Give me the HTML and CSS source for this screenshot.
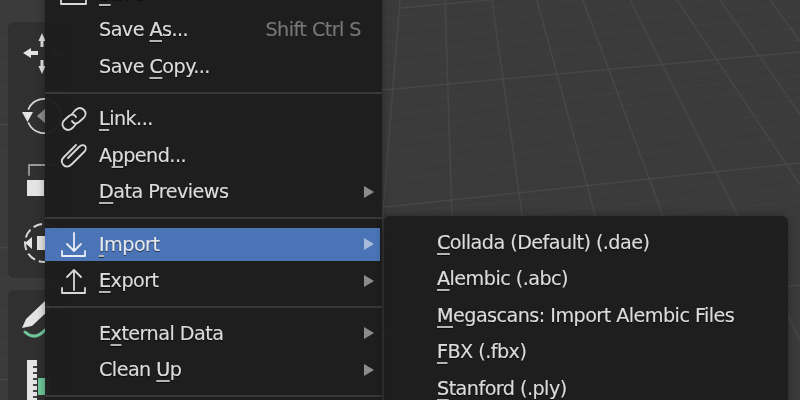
FILE: index.html
```html
<!DOCTYPE html>
<html lang="en">
<head>
<meta charset="utf-8">
<title>File menu</title>
<link rel="stylesheet" href="styles.css">
</head>
<body>
<main class="stage">
  <svg class="grid" viewBox="0 0 800 400" aria-hidden="true">
    <g class="minor">
      <path d="M0 40L800 -32M0 52L800 -20M0 64L800 -8M0 76L800 4M0 88L800 16M0 100L800 28M0 113L800 40M0 138L800 64M0 151L800 76M0 165L800 88M0 178L800 100M0 192L800 112M0 206L800 124M0 220L800 137M0 248L800 175M0 264L800 188M0 279L800 201M0 295L800 214M0 311L800 228M0 327L800 242M0 344L800 256M0 360L800 270M0 396L800 300M0 416L800 316"/>
    </g>
    <g class="major">
      <path d="M400 8L800 -28M0 125L800 52M0 248L800 163M0 380L800 285M445 0L458 400M492 0L548 400M537 0L645 400M583 0L731 400M630 0L830 400M677 0L943 400M720 0L1000 400M770 0L1060 400M400 0L368 400"/>
    </g>
  </svg>

  <aside class="toolbar">
    <div class="tool-group">
      <div class="tool">
        <svg viewBox="0 0 50 50" width="50" height="50"><path class="ic-fill" d="M8 24l8-5v3h7v4h-7v3zM27 4l3.500 8h-2v6h-3v-6h-2zM27 45l-3.500-8h2v-6h3v6h2z"/><path class="ic-dim" d="M50 24l-8-5v3h-6v4h6v3z"/></svg>
      </div>
      <div class="tool">
        <svg viewBox="0 0 50 50" width="50" height="50"><path class="ic-line" d="M13.500 16A17 17 0 1 1 13.500 30"/><path class="ic-fill" d="M7 19h11l-5.500 10z"/><path class="ic-dim" d="M22 23l9-8v16z"/></svg>
      </div>
      <div class="tool">
        <svg viewBox="0 0 50 50" width="50" height="50"><path class="ic-line ic-soft" d="M14 18V8h26"/><path class="ic-fill" d="M12 23h17v16H12z"/></svg>
      </div>
      <div class="tool">
        <svg viewBox="0 0 50 50" width="50" height="50"><circle class="ic-dash" cx="29" cy="22" r="19"/><path class="ic-fill" d="M10 22l7-6v12zM22 15h13v14H22z"/></svg>
      </div>
    </div>
    <div class="tool-group">
      <div class="tool">
        <svg viewBox="0 0 50 50" width="50" height="50"><path class="ic-fill" d="M7 31l4-9L30 4l6 7-19 18z"/><path class="ic-green" d="M10 35Q20 44 30 33"/></svg>
      </div>
      <div class="tool">
        <svg viewBox="0 0 50 50" width="50" height="50"><path class="ic-fill" d="M12 -1h10v60H12z"/><path class="ic-ticks" d="M18 6h4M18 12h4M18 18h4M18 24h4M18 30h4M18 36h4M18 42h4"/><path class="ic-greenfill" d="M23 17h12v17H23z"/></svg>
      </div>
    </div>
  </aside>

  <nav class="menu file-menu">
    <div class="row"><span class="slot"><svg viewBox="0 0 28 28" width="28" height="28"><path class="ic-line" d="M1 -20H26V25H1z"/></svg></span><span class="label"><u>S</u>ave</span><span class="shortcut">Ctrl S</span><span class="end"></span></div>
    <div class="row"><span class="slot"></span><span class="label">Save <u>A</u>s...</span><span class="shortcut">Shift Ctrl S</span><span class="end"></span></div>
    <div class="row"><span class="slot"></span><span class="label">Save <u>C</u>opy...</span><span class="end"></span></div>
    <div class="sep"></div>
    <div class="row"><span class="slot"><svg viewBox="0 0 28 28" width="28" height="28"><path class="ic-line" d="M12 9l3-3.500c3-3 6.500-3 9-.5s2 6-1 8.500l-4 3.500c-2.500 2-5.500 2-7-1"/><path class="ic-line" d="M16 19l-3 3.500c-3 3-6.500 3-9 .5s-2-6 1-8.500l4-3.500c2.500-2 5.500-2 7 1"/></svg></span><span class="label"><u>L</u>ink...</span><span class="end"></span></div>
    <div class="row"><span class="slot"><svg viewBox="0 0 28 28" width="28" height="28"><path class="ic-line" d="M8 17L19 6c2.500-2.500 5-2 6-1s1.500 3.500-1 6L12 23c-3.500 3.500-6.500 3-8.500 1S1 19 4 16L16 4"/></svg></span><span class="label">A<u>p</u>pend...</span><span class="end"></span></div>
    <div class="row"><span class="slot"></span><span class="label"><u>D</u>ata Previews</span><span class="end"><i class="arrow"></i></span></div>
    <div class="sep"></div>
    <div class="row active"><span class="slot"><svg viewBox="0 0 28 28" width="28" height="28"><path class="ic-line" d="M14 3v18M7 14l7 7 7-7M2 21v5h23v-5"/></svg></span><span class="label"><u>I</u>mport</span><span class="end"><i class="arrow"></i></span></div>
    <div class="row"><span class="slot"><svg viewBox="0 0 28 28" width="28" height="28"><path class="ic-line" d="M14 23V3M7 10l7-7 7 7M2 21v5h23v-5"/></svg></span><span class="label"><u>E</u>xport</span><span class="end"><i class="arrow"></i></span></div>
    <div class="sep"></div>
    <div class="row"><span class="slot"></span><span class="label">E<u>x</u>ternal Data</span><span class="end"><i class="arrow"></i></span></div>
    <div class="row"><span class="slot"></span><span class="label">Clean <u>U</u>p</span><span class="end"><i class="arrow"></i></span></div>
    <div class="sep"></div>
  </nav>

  <nav class="menu sub-menu">
    <div class="row"><span class="label"><u>C</u>ollada (Default) (.dae)</span></div>
    <div class="row"><span class="label"><u>A</u>lembic (.abc)</span></div>
    <div class="row"><span class="label"><u>M</u>egascans: Import Alembic Files</span></div>
    <div class="row"><span class="label"><u>F</u>BX (.fbx)</span></div>
    <div class="row"><span class="label"><u>S</u>tanford (.ply)</span></div>
  </nav>
</main>
</body>
</html>
```
FILE: styles.css
```css
* { box-sizing: border-box; }
html, body { margin: 0; padding: 0; background: #3b3b3b; }
.stage {
  position: relative;
  width: 800px;
  height: 400px;
  overflow: hidden;
  background: #3b3b3b;
  font-family: "DejaVu Sans", sans-serif;
  filter: blur(0.6px);
}
.grid { position: absolute; inset: 0; width: 800px; height: 400px; }
.grid path { fill: none; }
.minor path { stroke: #404040; stroke-width: 1; }
.major path { stroke: #474747; stroke-width: 1.5; }

.toolbar {
  position: absolute;
  left: 8px;
  top: 22px;
  display: flex;
  flex-direction: column;
  gap: 12px;
  width: 60px;
}
.tool-group { background: #303030; border-radius: 6px; }
.tool { height: 64px; display: flex; align-items: center; padding-left: 7px; }
.tool svg { overflow: visible; }
.ic-fill { fill: #e4e4e4; }
.ic-dim { fill: #8e8e8e; }
.ic-line { fill: none; stroke: #d8d8d8; stroke-width: 1.8; stroke-linejoin: round; stroke-linecap: round; }
.ic-soft { stroke: #999; }
.ic-dash { fill: none; stroke: #d8d8d8; stroke-width: 2; stroke-dasharray: 9 4; }
.ic-green { fill: none; stroke: #6fc79a; stroke-width: 3; stroke-linecap: round; }
.ic-greenfill { fill: #6fc79a; }
.ic-ticks { fill: none; stroke: #444; stroke-width: 2; }

.menu {
  position: absolute;
  display: flex;
  flex-direction: column;
  background: rgba(29, 29, 29, 0.97);
  color: #dcdcdc;
  font-size: 19.2px;
  letter-spacing: -0.55px;
  -webkit-text-stroke: 0.15px #dcdcdc;
  box-shadow: 0 0 8px rgba(0, 0, 0, 0.35);
}
.file-menu { left: 45px; top: -25px; width: 337px; }
.sub-menu { left: 384px; top: 216px; width: 404px; height: 240px; padding-top: 8px; border-radius: 6px; }

.row {
  display: flex;
  flex: none;
  align-items: center;
  height: 33px;
  margin: 1.75px 2px 1.75px 0;
  white-space: nowrap;
}
.slot { width: 54px; flex: none; padding-left: 15px; display: flex; align-items: center; }
.slot svg { overflow: visible; display: block; }
.label { flex: 1; text-shadow: 0 1px 1px rgba(0, 0, 0, 0.6); }
.label u {
  text-decoration: underline;
  text-decoration-color: #b5b5b5;
  text-decoration-thickness: 1.5px;
  text-underline-offset: 4px;
  text-decoration-skip-ink: none;
}
.shortcut { color: #777; -webkit-text-stroke: 0.15px #777; }
.end { width: 19px; flex: none; display: flex; justify-content: flex-start; padding-left: 3px; }
.arrow {
  display: block;
  width: 0;
  height: 0;
  border-left: 10px solid #8c8c8c;
  border-top: 6px solid transparent;
  border-bottom: 6px solid transparent;
}
.sep { height: 16px; flex: none; display: flex; align-items: center; }
.sep::after { content: ""; display: block; width: 100%; height: 2px; background: #383838; }

.row.active { background: #4a74b5; color: #e6e9f0; }
.row.active .arrow { border-left-color: #a9bcdb; }
.row.active .ic-line { stroke: #e8edf5; }
.sub-menu .row { margin-right: 0; padding-left: 53px; }
```
